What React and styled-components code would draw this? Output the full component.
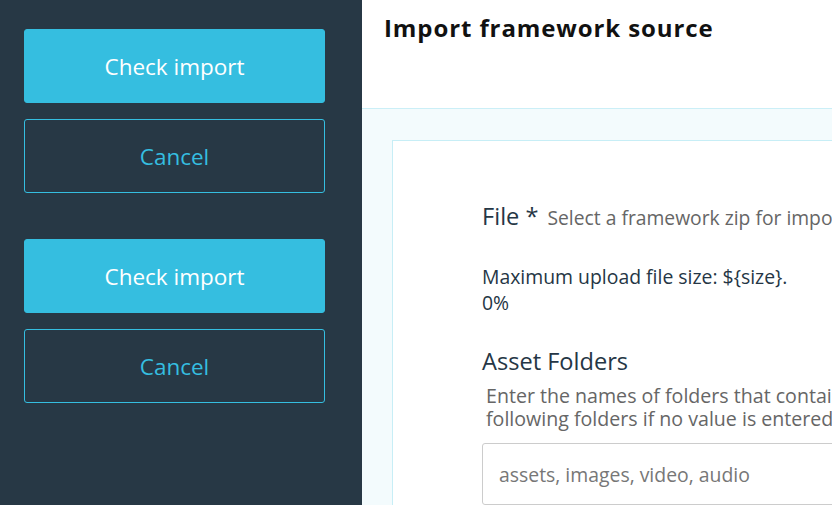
import React from 'react';
import styled, { createGlobalStyle } from 'styled-components';

const GlobalStyle = createGlobalStyle`
    html, body {
        margin:0;
        padding:0;
        overflow:hidden;
    }
    body {
        font-family:"Open Sans", "Liberation Sans", sans-serif;
    }
    * {
        box-sizing:border-box;
    }
`

const App = () => {
    return (
        <Page>
            <GlobalStyle />
            <Sidebar>
                <ButtonGroup>
                    <SideBtn primary>Check import</SideBtn>
                    <SideBtn>Cancel</SideBtn>
                </ButtonGroup>
                <ButtonGroup>
                    <SideBtn primary>Check import</SideBtn>
                    <SideBtn>Cancel</SideBtn>
                </ButtonGroup>
            </Sidebar>
            <Main>
                <Header>
                    <Title>Import framework source</Title>
                </Header>
                <Content>
                    <Panel>
                        <FileRow>
                            <FieldLabel>File *</FieldLabel>
                            <FieldHint>Select a framework zip for import</FieldHint>
                        </FileRow>
                        <UploadInfo>
                            Maximum upload file size: {'${size}'}.
                            <br />
                            0%
                        </UploadInfo>
                        <FieldLabel>Asset Folders</FieldLabel>
                        <HelpText>
                            Enter the names of folders that contain assets. Defaults to the
                            <br />
                            following folders if no value is entered.
                        </HelpText>
                        <TextInput placeholder='assets, images, video, audio' />
                    </Panel>
                </Content>
            </Main>
        </Page>
    );
};

const Page = styled.div`
    display:flex;
    width:832px;
    height:505px;
    overflow:hidden;
`

const Sidebar = styled.aside`
    flex:0 0 362px;
    background:#273845;
    padding:29px 37px 0 24px;
    display:flex;
    flex-direction:column;
    gap:46px;
`

const ButtonGroup = styled.div`
    display:flex;
    flex-direction:column;
    gap:16px;
`

const SideBtn = styled.button`
    height:74px;
    width:301px;
    border-radius:3px;
    border:1px solid #35bee0;
    background:${props => props.primary ? '#35bee0' : 'transparent'};
    color:${props => props.primary ? '#ffffff' : '#35bee0'};
    font-family:"Open Sans", sans-serif;
    font-size:22.5px;
    cursor:pointer;
`

const Main = styled.main`
    flex:1;
    min-width:0;
    display:flex;
    flex-direction:column;
    background:#ffffff;
`

const Header = styled.header`
    height:110px;
    padding:12px 22px 0;
    border-bottom:1px solid #cbeff7;
`

const Title = styled.h1`
    margin:0;
    font-family:"Open Sans", "Liberation Sans", sans-serif;
    font-weight:700;
    font-size:24px;
    line-height:32px;
    letter-spacing:0.9px;
    color:#111;
    white-space:nowrap;
`

const Content = styled.div`
    flex:1;
    background:#f3fbfd;
    padding:31px 0 0 30px;
`

const Panel = styled.section`
    width:900px;
    height:100%;
    background:#ffffff;
    border:1px solid #c7eef6;
    border-right:none;
    border-bottom:none;
    padding:60px 0 0 89px;
`

const FileRow = styled.div`
    display:flex;
    align-items:baseline;
    gap:9px;
    white-space:nowrap;
`

const FieldLabel = styled.div`
    font-size:23.6px;
    color:#253645;
    line-height:30px;
    white-space:nowrap;
`

const FieldHint = styled.span`
    font-size:19.3px;
    color:#666;
`

const UploadInfo = styled.p`
    margin:33px 0 30px;
    font-size:19.4px;
    line-height:26px;
    color:#253645;
    white-space:nowrap;
`

const HelpText = styled.p`
    margin:8px 0 13px;
    padding-left:4px;
    font-size:19.6px;
    line-height:23px;
    color:#666;
    white-space:nowrap;
`

const TextInput = styled.input`
    display:block;
    width:420px;
    height:62px;
    border:1px solid #ccc;
    border-radius:3px;
    padding:0 16px;
    font-family:"Open Sans", sans-serif;
    font-size:19.4px;
    color:#333;
    &::placeholder {
        color:#777;
    }
`

export default App;
